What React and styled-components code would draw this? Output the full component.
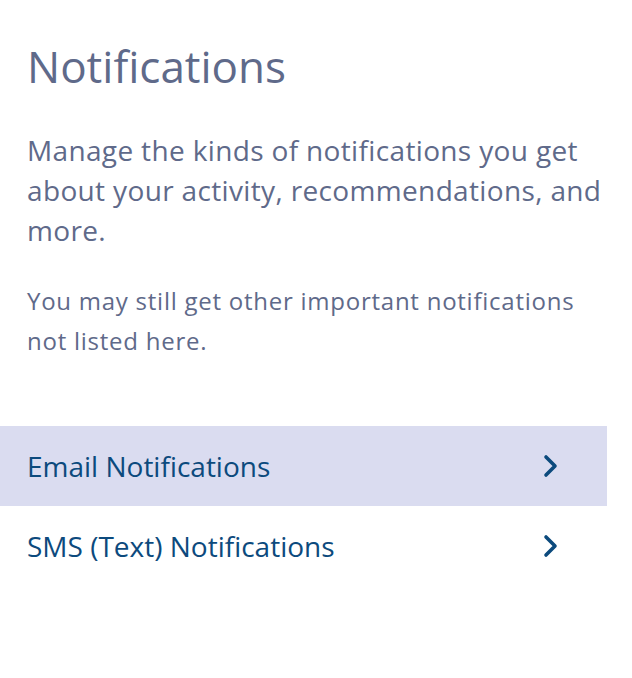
import React from "react";
import styled, { createGlobalStyle } from "styled-components";

const Global = createGlobalStyle`
  html, body { margin: 0; padding: 0; background: #ffffff; }
  body { font-family: "Open Sans", "Noto Sans", sans-serif; }
`;

const Page = styled.div`
  width: 607px;
  padding-top: 36px;
`;

const Intro = styled.section`
  padding: 0 0 0 27px;
`;

const Title = styled.h1`
  margin: 0;
  font-size: 44px;
  font-weight: 400;
  line-height: 60px;
  color: #5f6a8a;
`;

const Lead = styled.p`
  margin: 34px 0 0;
  font-size: 28px;
  line-height: 40px;
  color: #5f6a8a;
  letter-spacing: 0.35px;
`;

const Note = styled.p`
  margin: 31px 0 0;
  font-size: 24px;
  line-height: 40px;
  color: #5f6a8a;
  letter-spacing: 0.75px;
`;

const List = styled.nav`
  margin-top: 65px;
  display: flex;
  flex-direction: column;
`;

const Row = styled.a`
  height: 80px;
  display: flex;
  align-items: center;
  justify-content: space-between;
  padding: 0 48px 0 27px;
  background: ${(p) => (p.$active ? "#dadcf0" : "transparent")};
  color: #0c4a7d;
  font-size: 28px;
  text-decoration: none;
`;

const Chevron = () => (
  <svg width="16" height="24" viewBox="0 0 16 24" fill="none">
    <path d="M3 3l9 9-9 9" stroke="#0c4a7d" strokeWidth="3.6" strokeLinecap="round" strokeLinejoin="round" />
  </svg>
);

export default function App() {
  return (
    <Page>
      <Global />
      <Intro>
        <Title>Notifications</Title>
        <Lead>
          Manage the kinds of notifications you get about your activity, recommendations, and more.
        </Lead>
        <Note>You may still get other important notifications not listed here.</Note>
      </Intro>
      <List>
        <Row $active href="#">
          Email Notifications
          <Chevron />
        </Row>
        <Row href="#">
          SMS (Text) Notifications
          <Chevron />
        </Row>
      </List>
    </Page>
  );
}
